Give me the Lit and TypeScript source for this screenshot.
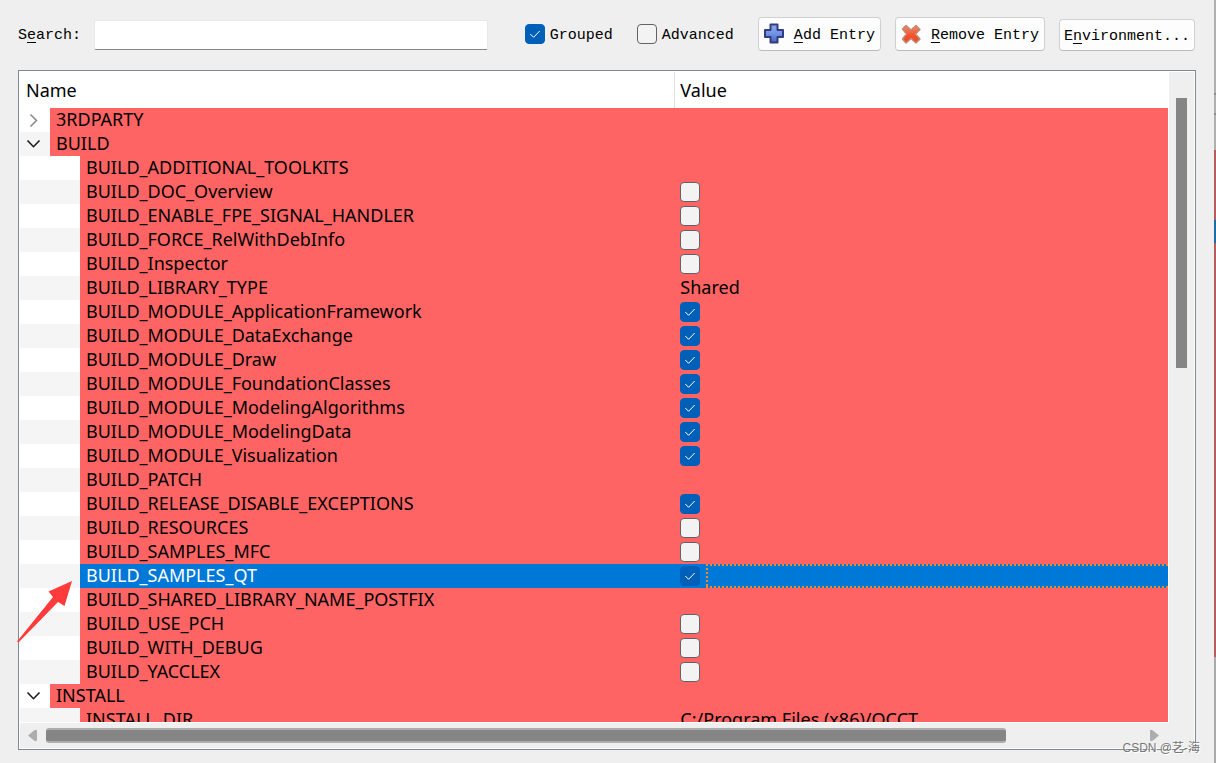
import { LitElement, html, css, svg, nothing } from "lit";
import { customElement, state } from "lit/decorators.js";
import { classMap } from "lit/directives/class-map.js";

type Value = boolean | string;

interface Row {
  name: string;
  level: 0 | 1;
  open?: boolean;
  value?: Value;
}

const ROWS: Row[] = [
  { name: "3RDPARTY", level: 0, open: false },
  { name: "BUILD", level: 0, open: true },
  { name: "BUILD_ADDITIONAL_TOOLKITS", level: 1 },
  { name: "BUILD_DOC_Overview", level: 1, value: false },
  { name: "BUILD_ENABLE_FPE_SIGNAL_HANDLER", level: 1, value: false },
  { name: "BUILD_FORCE_RelWithDebInfo", level: 1, value: false },
  { name: "BUILD_Inspector", level: 1, value: false },
  { name: "BUILD_LIBRARY_TYPE", level: 1, value: "Shared" },
  { name: "BUILD_MODULE_ApplicationFramework", level: 1, value: true },
  { name: "BUILD_MODULE_DataExchange", level: 1, value: true },
  { name: "BUILD_MODULE_Draw", level: 1, value: true },
  { name: "BUILD_MODULE_FoundationClasses", level: 1, value: true },
  { name: "BUILD_MODULE_ModelingAlgorithms", level: 1, value: true },
  { name: "BUILD_MODULE_ModelingData", level: 1, value: true },
  { name: "BUILD_MODULE_Visualization", level: 1, value: true },
  { name: "BUILD_PATCH", level: 1 },
  { name: "BUILD_RELEASE_DISABLE_EXCEPTIONS", level: 1, value: true },
  { name: "BUILD_RESOURCES", level: 1, value: false },
  { name: "BUILD_SAMPLES_MFC", level: 1, value: false },
  { name: "BUILD_SAMPLES_QT", level: 1, value: true },
  { name: "BUILD_SHARED_LIBRARY_NAME_POSTFIX", level: 1 },
  { name: "BUILD_USE_PCH", level: 1, value: false },
  { name: "BUILD_WITH_DEBUG", level: 1, value: false },
  { name: "BUILD_YACCLEX", level: 1, value: false },
  { name: "INSTALL", level: 0, open: true },
  { name: "INSTALL_DIR", level: 1, value: "C:/Program Files (x86)/OCCT" },
];

const checkbox = css`
  .check {
    appearance: none;
    flex: none;
    box-sizing: border-box;
    width: 20px;
    height: 20px;
    margin: 0;
    border: 1px solid #626262;
    border-radius: 4px;
    background: #f3f3f3;
  }
  .check:checked {
    border-color: #005fb8;
    background: #005fb8
      url("data:image/svg+xml,%3Csvg xmlns='http://www.w3.org/2000/svg' width='18' height='18' fill='none' stroke='white' stroke-width='1'%3E%3Cpath d='M4.3 9 7.600 12.3 13.7 6'/%3E%3C/svg%3E");
  }
`;

@customElement("cache-tree")
export class CacheTree extends LitElement {
  @state() private selected = "BUILD_SAMPLES_QT";

  static styles = [
    checkbox,
    css`
      :host {
        display: grid;
        grid-template-columns: minmax(0, 1fr) 25px;
        grid-template-rows: minmax(0, 1fr) 25px;
        border: 1px solid #828790;
        padding: 1px;
        background: #fff;
        font: 18px/24px "Noto Sans", "Open Sans", sans-serif;
        color: #000;
      }
      .view {
        overflow: hidden;
        padding: 0 1px 1px 0;
        display: flex;
        align-items: flex-start;
        min-height: 0;
      }
      .clip {
        width: 100%;
        height: 100%;
        overflow: hidden;
      }
      .table {
        width: 100%;
        table-layout: fixed;
        border-collapse: collapse;
      }
      .name-col {
        width: 57%;
      }
      th {
        height: 36px;
        padding: 0 6px;
        text-align: left;
        font-weight: normal;
        background: #fff;
        box-sizing: border-box;
      }
      .value-head {
        background: linear-gradient(#e2e2e2, #e2e2e2) 0 0 / 1px 100% no-repeat #fff;
      }
      td {
        height: 24px;
        padding: 0;
        background: #ff6464;
        white-space: nowrap;
      }
      .name {
        display: flex;
        height: 24px;
      }
      .branch {
        flex: none;
        width: 30px;
        margin-right: 6px;
        background: #fff;
      }
      .branch.deep {
        width: 60px;
      }
      .branch.odd {
        background: #f5f5f5;
      }
      .toggle {
        display: block;
        width: 28px;
        height: 24px;
        padding: 0;
        border: 0;
        background: none;
      }
      .toggle svg {
        display: block;
      }
      .text {
        line-height: 22px;
      }
      .value {
        display: flex;
        align-items: center;
        height: 24px;
        padding-left: 6px;
      }
      .value .text {
        height: 24px;
      }
      .selected td {
        background: #0078d7;
        color: #fff;
      }
      .focus {
        flex: 1;
        height: 24px;
        margin-left: 6px;
        background:
          repeating-linear-gradient(90deg, #ff8728 0 2px, transparent 2px 4px) 0 0 / 100% 2px no-repeat,
          repeating-linear-gradient(90deg, #ff8728 0 2px, transparent 2px 4px) 0 100% / 100% 2px no-repeat,
          repeating-linear-gradient(#ff8728 0 2px, transparent 2px 4px) 0 0 / 2px 100% no-repeat;
      }
      .vbar {
        display: grid;
        grid-template-rows: 26px 270fr 380fr;
        justify-content: center;
        background: #efefef;
        grid-row: 1 / 3;
        grid-column: 2;
      }
      .vthumb {
        grid-row: 2;
        width: 11px;
        background: #858585;
      }
      .hbar {
        display: flex;
        align-items: center;
        background: #efefef;
        grid-row: 2;
      }
      .arrow {
        flex: none;
        width: 26px;
        height: 25px;
      }
      .track {
        flex: 1;
        display: grid;
        grid-template-columns: 960fr 137fr;
      }
      .hthumb {
        height: 11px;
        border: solid #adadad;
        border-width: 2px 0;
        border-radius: 3px;
        background: #858585;
      }
    `,
  ];

  private renderRow(row: Row, i: number) {
    const selected = row.name === this.selected;
    return html`<tr class=${classMap({ selected })} @click=${() => (this.selected = row.name)}>
      <td>
        <div class="name">
          <div class=${classMap({ branch: true, deep: row.level === 1, odd: i % 2 === 1 })}>
            ${row.level === 0
              ? html`<button class="toggle" aria-label=${"Toggle " + row.name}>
                  <svg width="28" height="24" fill="none" stroke-width="1.6">
                    ${row.open
                      ? svg`<path stroke="#1a1a1a" d="M7.5 8.5 13.5 14.7 19.5 8.5"/>`
                      : svg`<path stroke="#8a8a8a" d="M10.5 6.5 16.5 12.5 10.5 18.5"/>`}
                  </svg>
                </button>`
              : nothing}
          </div>
          <span class="text">${row.name}</span>
        </div>
      </td>
      <td>
        <div class="value">
          ${typeof row.value === "boolean"
            ? html`<input class="check" type="checkbox" aria-label=${row.name} .checked=${row.value} />`
            : html`<span class="text">${row.value ?? ""}</span>`}
          ${selected ? html`<div class="focus"></div>` : nothing}
        </div>
      </td>
    </tr>`;
  }

  render() {
    return html`
      <div class="view">
        <div class="clip">
          <table class="table">
            <colgroup><col class="name-col" /><col /></colgroup>
            <thead>
              <tr><th>Name</th><th class="value-head">Value</th></tr>
            </thead>
            <tbody>${ROWS.map((r, i) => this.renderRow(r, i))}</tbody>
          </table>
        </div>
      </div>
      <div class="vbar"><div class="vthumb"></div></div>
      <div class="hbar">
        <svg class="arrow"><path fill="#adadad" d="M8 12.5 14 7.5Q17 6 17 8V17Q17 19 14 17.5Z" /></svg>
        <div class="track"><div class="hthumb"></div></div>
        <svg class="arrow"><path fill="#adadad" d="M16 12.5 10 7.5Q7 6 7 8V17Q7 19 10 17.5Z" /></svg>
      </div>
    `;
  }
}

@customElement("app-root")
export class AppRoot extends LitElement {
  static styles = [
    checkbox,
    css`
      :host {
        display: grid;
        grid-template-columns: minmax(0, 1fr) 2px;
        height: 100vh;
        position: relative;
        overflow: hidden;
        background: #efefef;
        font: 15px/20px "Liberation Mono", monospace;
        color: #000;
      }
      .panel {
        display: flex;
        flex-direction: column;
        min-height: 0;
        padding: 17px 18px 13px 18px;
      }
      .toolbar {
        display: flex;
        align-items: center;
        height: 34px;
        margin-bottom: 19px;
        padding-right: 1px;
      }
      .caption {
        padding-top: 4px;
      }
      u {
        text-underline-offset: 3px;
        text-decoration-thickness: 1px;
      }
      .search {
        flex: 1;
        min-width: 0;
        box-sizing: border-box;
        height: 30px;
        margin: 2px 37px 0 13px;
        padding: 0 6px;
        border: 1px solid #e8e8e8;
        border-bottom-color: #868686;
        border-radius: 2px;
        background: #fff;
        font: inherit;
      }
      .option {
        display: flex;
        align-items: center;
        gap: 5px;
        margin-right: 24px;
      }
      .button {
        display: flex;
        align-items: center;
        gap: 9px;
        box-sizing: border-box;
        height: 34px;
        margin: 0 14px 0 0;
        padding: 0 5px 0 4px;
        border: 1px solid #d0d0d0;
        border-bottom-color: #bcbcbc;
        border-radius: 4px;
        background: #fdfdfd;
        color: inherit;
        font: inherit;
        white-space: nowrap;
      }
      .button.plain {
        height: 32px;
        margin: 2px 0 0;
        padding: 0 4px;
      }
      .icon {
        display: block;
        flex: none;
      }
      .tree {
        flex: 1;
        min-height: 0;
      }
      .behind {
        background: linear-gradient(
          #b0b0b0 0 93px,
          #909090 93px 95px,
          #b0b0b0 95px 113px,
          #909090 113px 115px,
          #b0b0b0 115px 150px,
          #b55c5e 150px 220px,
          #1f6ba8 220px 243px,
          #b55c5e 243px 657px,
          #a9a9a9 657px
        );
      }
      .pointer {
        position: absolute;
        left: 17px;
        top: 580px;
      }
      .mark {
        position: absolute;
        right: 16px;
        bottom: 7px;
        font: 12px/16px "Liberation Sans", "Noto Sans CJK SC", sans-serif;
        color: #777;
        text-shadow: 1px 1px 0 #fff;
      }
    `,
  ];

  render() {
    return html`
      <main class="panel">
        <div class="toolbar">
          <label class="caption" for="search">S<u>e</u>arch:</label>
          <input class="search" id="search" type="text" />
          <label class="option"><input class="check" type="checkbox" checked /><span class="caption">Grouped</span></label>
          <label class="option"><input class="check" type="checkbox" /><span class="caption">Advanced</span></label>
          <button class="button">
            <svg class="icon" width="22" height="22">
              <defs>
                <linearGradient id="blue" x2="0" y2="1">
                  <stop offset="0" stop-color="#8ea6e0" />
                  <stop offset=".5" stop-color="#6f95e6" />
                  <stop offset="1" stop-color="#4a62b4" />
                </linearGradient>
              </defs>
              <path fill="url(#blue)" stroke="#343c86" stroke-width="2" stroke-linejoin="round"
                d="M7.500 1.500h7v5.500h5.500v7h-5.500v5.500h-7v-5.500H2v-7h5.500Z" />
            </svg>
            <span class="caption"><u>A</u>dd Entry</span>
          </button>
          <button class="button">
            <svg class="icon" width="22" height="22">
              <defs>
                <linearGradient id="red" x2="0" y2="1">
                  <stop offset="0" stop-color="#f08a68" />
                  <stop offset=".6" stop-color="#f4502a" />
                  <stop offset="1" stop-color="#ea4a20" />
                </linearGradient>
              </defs>
              <path fill="url(#red)" stroke="#c08a78" stroke-width="1.500" stroke-linejoin="round"
                d="M6 2.500 11 7 16 2.500 20 6.500 15.500 11 20 16 16 20 11 15.500 6 20 2.500 16 6.500 11 2.500 6Z" />
            </svg>
            <span class="caption"><u>R</u>emove Entry</span>
          </button>
          <button class="button plain"><span class="caption">E<u>n</u>vironment...</span></button>
        </div>
        <cache-tree class="tree"></cache-tree>
      </main>
      <div class="behind"></div>
      <svg class="pointer" width="56" height="64">
        <path fill="#ff3b3b" d="M55 1 31.500 11.500 36 17 0 61.500 1.500 62.500 41 22 47.500 26Z" />
      </svg>
      <div class="mark">CSDN @艺-海</div>
    `;
  }
}
